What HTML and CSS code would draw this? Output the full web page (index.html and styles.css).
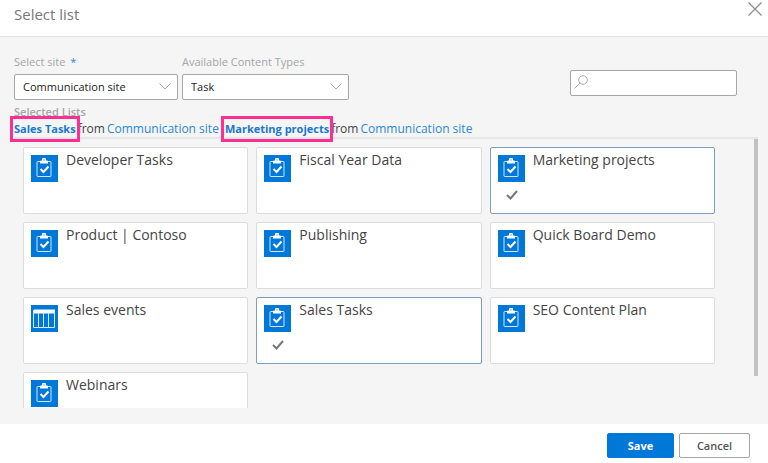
FILE: index.html
```html
<!DOCTYPE html>
<html lang="en">
<head>
<meta charset="utf-8">
<meta name="viewport" content="width=device-width, initial-scale=1">
<title>Select list</title>
<link rel="stylesheet" href="styles.css">
</head>
<body>
<svg class="sprite" aria-hidden="true">
  <symbol id="tasks" viewBox="0 0 27 27">
    <path d="M9 6.5H6.5q-.5 0-.5.5v14q0 .5.5.5h13q.5 0 .5-.5V7q0-.5-.5-.5H17" fill="none" stroke="#cfe6f8"/>
    <path d="M9 8.500V6.500q0-1 1-1h1V4q0-1 1-1h2q1 0 1 1v1.500h1q1 0 1 1v2z" fill="#fff"/>
    <path d="M12.500 4.500h1v1h-1z" fill="#0078d7"/>
    <path d="M9.500 14l3 3 5-5.500" fill="none" stroke="#fff" stroke-width="2"/>
  </symbol>
  <symbol id="table" viewBox="0 0 27 27">
    <path d="M3 4.500h21V8.500H3z" fill="#fff"/>
    <path d="M2.500 5v17.500h21V5M7.500 8v14.500M12.500 8v14.500M17.500 8v14.500" fill="none" stroke="#d5e9f9"/>
  </symbol>
  <symbol id="check" viewBox="0 0 12 10">
    <path d="M1 5l3.500 3.500L11 1" fill="none" stroke="#777" stroke-width="2"/>
  </symbol>
  <symbol id="chevron" viewBox="0 0 12 7">
    <path d="M.5.5L6 6 11.500.5" fill="none" stroke="#aaa"/>
  </symbol>
</svg>
<div class="dialog" role="dialog" aria-labelledby="title">
  <header class="header">
    <h1 class="title" id="title">Select list</h1>
    <button class="close" type="button" aria-label="Close">
      <svg viewBox="0 0 14 14"><path d="M.5.5l13 13M13.500.5l-13 13" fill="none" stroke="#8c8c8c" stroke-width="1.200"/></svg>
    </button>
  </header>
  <main class="content">
    <div class="filters">
      <div class="field">
        <label for="site">Select site <span class="required">*</span></label>
        <div class="control">
          <select id="site"><option>Communication site</option></select>
          <svg class="chevron"><use href="#chevron"/></svg>
        </div>
      </div>
      <div class="field field-type">
        <label for="type">Available Content Types</label>
        <div class="control">
          <select id="type"><option>Task</option></select>
          <svg class="chevron"><use href="#chevron"/></svg>
        </div>
      </div>
      <div class="control search">
        <input type="search" aria-label="Search lists">
        <svg class="search-icon" viewBox="0 0 14 14"><circle cx="9" cy="5" r="4.300" fill="none" stroke="#aaa"/><path d="M6 8L.5 13.500" stroke="#aaa"/></svg>
      </div>
    </div>
    <h2 class="selected-title">Selected Lists</h2>
    <div class="selected">
      <span class="entry"><a class="name" href="#sales">Sales Tasks</a><span>from</span><a href="#site">Communication site</a></span>
      <span class="entry"><a class="name" href="#marketing">Marketing projects</a><span>from</span><a href="#site">Communication site</a></span>
    </div>
    <div class="lists">
      <div class="grid">
        <button class="card" type="button"><svg class="tile"><use href="#tasks"/></svg><span>Developer Tasks</span></button>
        <button class="card" type="button"><svg class="tile"><use href="#tasks"/></svg><span>Fiscal Year Data</span></button>
        <button class="card checked" type="button" id="marketing" aria-pressed="true"><svg class="tile"><use href="#tasks"/></svg><span>Marketing projects</span><svg class="check"><use href="#check"/></svg></button>
        <button class="card" type="button"><svg class="tile"><use href="#tasks"/></svg><span>Product | Contoso</span></button>
        <button class="card" type="button"><svg class="tile"><use href="#tasks"/></svg><span>Publishing</span></button>
        <button class="card" type="button"><svg class="tile"><use href="#tasks"/></svg><span>Quick Board Demo</span></button>
        <button class="card" type="button"><svg class="tile"><use href="#table"/></svg><span>Sales events</span></button>
        <button class="card checked" type="button" id="sales" aria-pressed="true"><svg class="tile"><use href="#tasks"/></svg><span>Sales Tasks</span><svg class="check"><use href="#check"/></svg></button>
        <button class="card" type="button"><svg class="tile"><use href="#tasks"/></svg><span>SEO Content Plan</span></button>
        <button class="card" type="button"><svg class="tile"><use href="#tasks"/></svg><span>Webinars</span></button>
      </div>
      <div class="thumb"></div>
    </div>
  </main>
  <footer class="footer">
    <button class="button primary" type="button">Save</button>
    <button class="button" type="button">Cancel</button>
  </footer>
</div>
</body>
</html>
```
FILE: styles.css
```css
* { box-sizing: border-box; }
body {
  margin: 0;
  font: 12px/16px "Open Sans", "Noto Sans", sans-serif;
  color: #444;
  background: #fff;
}
button, input, select { font: inherit; margin: 0; }
h1, h2 { margin: 0; }
a { color: #2b88d8; text-decoration: none; }
.sprite { display: none; }
.dialog { display: flex; flex-direction: column; height: 100vh; }
.header {
  display: flex;
  justify-content: space-between;
  align-items: flex-start;
  padding: 2px 6px 10px 14px;
  border-bottom: 1px solid #e1e1e1;
}
.title { font-size: 15px; line-height: 24px; font-weight: 400; color: #777; }
.close { padding: 0; border: 0; background: none; width: 14px; height: 14px; }
.close svg { display: block; width: 14px; height: 14px; }
.content {
  flex: 1;
  min-height: 0;
  display: flex;
  flex-direction: column;
  padding: 17px 10px 16px 14px;
  background: #f5f5f5;
}
.filters { display: flex; align-items: flex-start; gap: 4px; }
.field { flex: 0 1 164px; }
.field-type { flex-basis: 167px; }
.field label { display: block; height: 20px; font-size: 11px; color: #a6a6a6; white-space: nowrap; }
.required { color: #2b88d8; margin-left: 2px; }
.control { position: relative; }
.control select, .control input {
  display: block;
  appearance: none;
  width: 100%;
  height: 26px;
  padding: 0 28px 0 8px;
  border: 1px solid #a6a6a6;
  border-radius: 2px;
  background: #fff;
  color: #222;
  font-size: 11px;
}
.chevron { position: absolute; right: 7px; top: 9px; width: 12px; height: 7px; pointer-events: none; }
.search { flex: 0 1 167px; margin: 16px 21px 0 auto; }
.control input { padding: 0 8px 0 24px; }
.search-icon { position: absolute; left: 4px; top: 5px; width: 14px; height: 14px; }
.selected-title { margin-top: 4px; font-size: 11px; line-height: 16px; font-weight: 600; color: #a6a6a6; }
.selected { display: flex; gap: 6px; line-height: 17px; white-space: nowrap; }
.entry { display: flex; align-items: baseline; gap: 2px; }
.name { position: relative; font-size: 11px; font-weight: 700; color: #1878d0; }
.name::after {
  content: "";
  position: absolute;
  inset: -4px -4px -5px;
  border: 3px solid #ff2f92;
  z-index: 1;
}
.lists {
  position: relative;
  flex: 1;
  min-height: 0;
  overflow: hidden;
  border-top: 2px solid #e6e6e6;
}
.thumb { position: absolute; top: 0; right: 0; width: 4px; height: 88%; background: #c2c2c2; }
.grid {
  display: grid;
  grid-template-columns: repeat(3, 1fr);
  gap: 8px;
  padding: 8px 43px 0 9px;
}
.card {
  display: grid;
  grid-template-columns: 27px 1fr;
  grid-template-rows: 27px 1fr;
  column-gap: 8px;
  height: 67px;
  padding: 7px;
  border: 1px solid #dcdcdc;
  border-radius: 2px;
  background: #fff;
  color: #444;
  font-size: 14px;
  line-height: 20px;
  text-align: left;
}
.card span { margin-top: -5px; }
.checked { border-color: #7f9dbf; }
.tile { display: block; width: 27px; height: 27px; background: #0078d7; }
.check { width: 12px; height: 10px; margin: 8px; }
.footer { display: flex; justify-content: flex-end; gap: 5px; padding: 9px 18px 5px; }
.button {
  min-width: 71px;
  height: 25px;
  padding: 0 12px;
  border: 1px solid #a6a6a6;
  border-radius: 2px;
  background: #fff;
  color: #555;
  font-size: 11px;
  font-weight: 600;
}
.primary { min-width: 67px; background: #0078d7; border-color: #0078d7; color: #fff; font-weight: 700; }
```
